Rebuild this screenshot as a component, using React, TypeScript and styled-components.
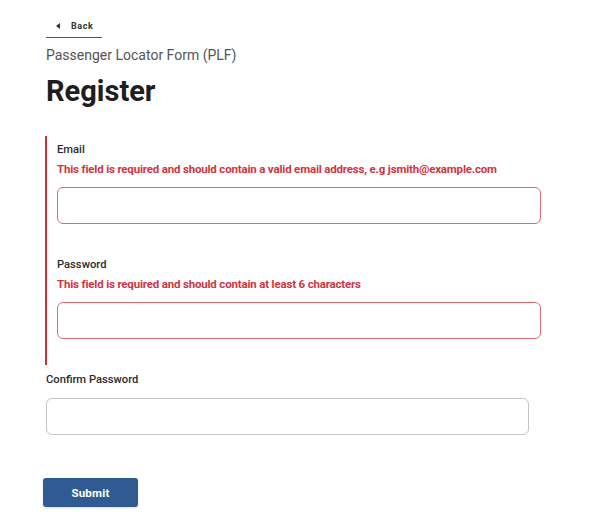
import styled, { createGlobalStyle } from 'styled-components';

const GlobalStyle = createGlobalStyle`
  html, body {
    margin: 0;
    padding: 0;
    background: #ffffff;
  }
  body {
    font-family: Roboto, "Liberation Sans", Arial, sans-serif;
    color: #222222;
  }
`;

interface FieldProps {
  label: string;
  error?: string;
  type?: string;
  width: number;
}

const Field = ({ label, error, type = 'text', width }: FieldProps) => (
  <FieldWrap>
    <Label>{label}</Label>
    {error && <ErrorText>{error}</ErrorText>}
    <Input type={type} $invalid={!!error} $width={width} />
  </FieldWrap>
);

const App = () => {
  return (
    <Page>
      <GlobalStyle />
      <BackLink href="#">
        <Caret />
        Back
      </BackLink>
      <Subtitle>Passenger Locator Form (PLF)</Subtitle>
      <Title>Register</Title>
      <Form onSubmit={(e) => e.preventDefault()}>
        <ErrorGroup>
          <Field
            label="Email"
            error="This field is required and should contain a valid email address, e.g jsmith@example.com"
            width={484}
          />
          <Field
            label="Password"
            type="password"
            error="This field is required and should contain at least 6 characters"
            width={484}
          />
        </ErrorGroup>
        <PlainGroup>
          <Field label="Confirm Password" type="password" width={483} />
        </PlainGroup>
        <SubmitButton type="submit">Submit</SubmitButton>
      </Form>
    </Page>
  );
};

export default App;

const Page = styled.div`
  padding: 16px 0 0 46px;
  width: 600px;
  height: 524px;
  box-sizing: border-box;
`;

const BackLink = styled.a`
  display: flex;
  align-items: center;
  gap: 11px;
  width: 56px;
  height: 22px;
  padding: 0 0 2px 10px;
  box-sizing: border-box;
  border-bottom: 1px solid #555555;
  font-size: 9px;
  font-weight: 700;
  letter-spacing: 0.6px;
  color: #333333;
  text-decoration: none;
`;

const Caret = styled.span`
  width: 0;
  height: 0;
  border-top: 3px solid transparent;
  border-bottom: 3px solid transparent;
  border-right: 4px solid #333333;
`;

const Subtitle = styled.div`
  margin-top: 8px;
  font-size: 14px;
  line-height: 18px;
  color: #555555;
`;

const Title = styled.h1`
  margin: 9px 0 0;
  font-size: 29px;
  line-height: 36px;
  font-weight: 700;
  color: #1e1e1e;
`;

const Form = styled.form`
  display: flex;
  flex-direction: column;
  margin-top: 27px;
`;

const ErrorGroup = styled.div`
  display: flex;
  flex-direction: column;
  gap: 32px;
  margin-left: -1px;
  padding: 5px 0 26px 10px;
  border-left: 2px solid #d0303a;
`;

const PlainGroup = styled.div`
  padding-top: 6px;
`;

const FieldWrap = styled.div`
  display: flex;
  flex-direction: column;
`;

const Label = styled.label`
  font-size: 11.2px;
  line-height: 18px;
  font-weight: 500;
  color: #2a2a2a;
`;

const ErrorText = styled.div`
  margin-top: 1px;
  font-size: 11.5px;
  line-height: 18px;
  font-weight: 700;
  letter-spacing: -0.18px;
  color: #d13440;
`;

const Input = styled.input<{ $invalid: boolean; $width: number }>`
  margin-top: 9px;
  width: ${(p) => p.$width}px;
  height: 37px;
  box-sizing: border-box;
  border-radius: 6px;
  border: 1px solid ${(p) => (p.$invalid ? '#e06a70' : '#c4c4c4')};
  background: #ffffff;
  outline: none;
  font-family: inherit;
  font-size: 13px;
  padding: 0 10px;
`;

const SubmitButton = styled.button`
  margin: 43px 0 0 -3px;
  width: 95px;
  height: 29px;
  border: none;
  border-radius: 3px;
  background: #2f5b92;
  color: #ffffff;
  font-family: inherit;
  font-size: 11.5px;
  font-weight: 700;
  letter-spacing: 0.2px;
  cursor: pointer;
  box-shadow: 0 1px 2px rgba(0, 0, 0, 0.15);
`;
